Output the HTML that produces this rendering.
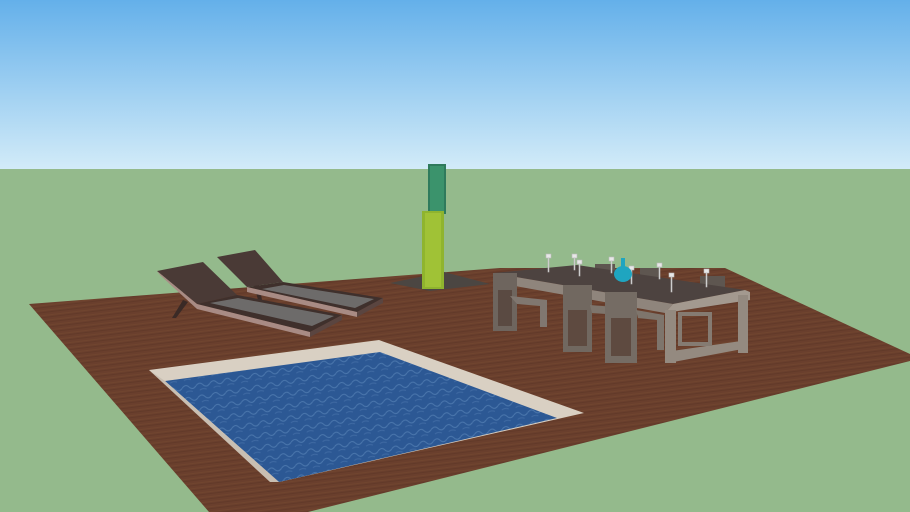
<!DOCTYPE html>
<html><head><meta charset="utf-8"><style>
html,body{margin:0;padding:0;width:910px;height:512px;overflow:hidden;background:#94ba8c}
svg{display:block}
</style></head><body>
<svg width="910" height="512" viewBox="0 0 910 512" xmlns="http://www.w3.org/2000/svg">
<defs>
<linearGradient id="sky" x1="0" y1="0" x2="0" y2="1">
<stop offset="0" stop-color="#64b0ea"/><stop offset="1" stop-color="#d2ebf8"/>
</linearGradient>
<pattern id="wood" width="60" height="5" patternUnits="userSpaceOnUse" patternTransform="rotate(-7)">
<rect width="60" height="5" fill="#6a3f2d"/>
<rect y="0" width="60" height="1" fill="#623a29"/>
<rect y="3" width="60" height="1" fill="#70452f"/>
</pattern>
<pattern id="water" width="14" height="12" patternUnits="userSpaceOnUse" patternTransform="rotate(-10)">
<rect width="14" height="12" fill="#2c5894"/>
<path d="M0 6 Q4 2 7 6 T14 6" stroke="#4b77ad" stroke-width="1" fill="none"/>
<path d="M3 11 Q6 9 10 11" stroke="#3f6aa3" stroke-width="1" fill="none"/>
</pattern>
</defs>
<rect width="910" height="169" fill="url(#sky)"/>
<rect y="169" width="910" height="343" fill="#94ba8c"/>
<polygon points="29,304 500,268 725,268 910,354 910,361 308,512 209,512" fill="url(#wood)"/>
<polygon points="149,370 379,340 584,413 279,482" fill="#d9d0c3"/>
<polygon points="165,381 380,352 557,418 279,482" fill="url(#water)"/>
<polygon points="149,370 165,381 279,482 270,482" fill="#c9bfb2"/>
<polygon points="390,283 444,272 490,284 430,291" fill="#4b4642"/>
<rect x="428" y="164" width="18" height="50" fill="#2f7a5c"/>
<rect x="430" y="166" width="14" height="46" fill="#3e9a70" opacity=".8"/>
<rect x="422" y="211" width="22" height="78" fill="#8fb42e"/>
<rect x="425" y="213" width="16" height="74" fill="#a6c83a" opacity=".7"/>
<polygon points="254,285 258,300 262,300 259,284" fill="#3a2a26"/>
<polygon points="217,257 255,250 283,282 247,287" fill="#4a3a36"/>
<polygon points="247,287 283,282 383,298 357,312" fill="#3f302c"/>
<polygon points="262,289 284,285 374,299 355,308" fill="#6d6b6a"/>
<polygon points="247,287 357,312 357,317 247,292" fill="#a88b84"/>
<polygon points="357,312 383,298 383,303 357,317" fill="#5a4540"/>
<polygon points="183,300 172,318 176,318 188,302" fill="#3a2a26"/>
<polygon points="157,271 203,262 237,295 197,304" fill="#4a3a36"/>
<polygon points="197,304 237,295 342,315 310,332" fill="#3f302c"/>
<polygon points="210,303 238,298 334,316 312,326" fill="#6d6b6a"/>
<polygon points="157,271 197,304 197,309 160,275" fill="#a88b84"/>
<polygon points="197,304 310,332 310,337 197,309" fill="#a88b84"/>
<polygon points="310,332 342,315 342,320 310,337" fill="#5a4540"/>
<rect x="595" y="264" width="20" height="10" fill="#5e5650"/>
<rect x="640" y="268" width="20" height="10" fill="#5e5650"/>
<rect x="700" y="276" width="25" height="12" fill="#5e5650"/>
<polygon points="493,273 577,265 745,290 673,304" fill="#4d4340"/>
<polygon points="493,273 673,304 665,313 493,282" fill="#8f857c"/>
<polygon points="673,304 745,290 750,292 750,300 665,313" fill="#a3998f"/>
<rect x="665" y="310" width="11" height="53" fill="#948a80"/>
<rect x="738" y="295" width="10" height="58" fill="#948a80"/>
<polygon points="665,352 748,340 748,348 668,363" fill="#948a80"/>
<rect x="680" y="314" width="30" height="30" fill="none" stroke="#857b72" stroke-width="4"/>
<rect x="493" y="273" width="24" height="58" fill="#6e655e"/>
<rect x="498" y="290" width="14" height="36" fill="#5a4a42"/>
<polygon points="510,296 547,300 547,327 540,327 540,306 517,304" fill="#807770"/>
<rect x="563" y="285" width="29" height="67" fill="#716860"/>
<rect x="568" y="310" width="19" height="36" fill="#5e4a40"/>
<polygon points="590,305 628,308 628,345 620,345 620,315 592,313" fill="#7e756c"/>
<rect x="605" y="292" width="32" height="71" fill="#756c64"/>
<rect x="611" y="318" width="20" height="38" fill="#5e4a40"/>
<polygon points="636,310 664,315 664,350 657,350 657,320 638,318" fill="#7e756c"/>
<g fill="#e8e8e8" stroke="#bbb" stroke-width=".6">
<rect x="546" y="254" width="5" height="4"/><rect x="548" y="258" width="1" height="14"/>
<rect x="572" y="254" width="5" height="4"/><rect x="574" y="258" width="1" height="12"/>
<rect x="577" y="260" width="5" height="4"/><rect x="579" y="264" width="1" height="12"/>
<rect x="609" y="257" width="5" height="4"/><rect x="611" y="261" width="1" height="12"/>
<rect x="629" y="266" width="5" height="4"/><rect x="631" y="270" width="1" height="14"/>
<rect x="657" y="263" width="5" height="4"/><rect x="659" y="267" width="1" height="12"/>
<rect x="669" y="273" width="5" height="4"/><rect x="671" y="277" width="1" height="15"/>
<rect x="704" y="269" width="5" height="4"/><rect x="706" y="273" width="1" height="14"/>
</g>
<ellipse cx="623" cy="274" rx="9" ry="8" fill="#1fa5c0"/>
<rect x="621" y="258" width="4" height="10" fill="#1fa5c0"/>
</svg>
</body></html>
